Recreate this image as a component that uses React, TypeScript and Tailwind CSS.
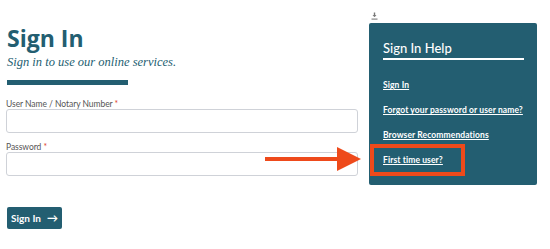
import React from "react";

const teal = "#235e71";

function DownloadIcon() {
  return (
    <svg width="7" height="8" viewBox="0 0 7 8" className="block">
      <path d="M3.5 0.5 V4.5" stroke="#777" strokeWidth="1.4" />
      <path d="M1.5 3 L3.5 5 L5.5 3 Z" fill="#777" />
      <rect x="0.5" y="6.5" width="6" height="1.2" fill="#888" />
    </svg>
  );
}

function Field({ label }: { label: string }) {
  return (
    <div className="flex flex-col">
      <label className="text-[8.5px] leading-[10px] tracking-[-0.05px] text-[#555]">
        {label} <span className="text-[#e0452a]">*</span>
      </label>
      <input className="mt-[0px] h-[24px] w-[352px] rounded-[3px] border border-[#cfd2d8] bg-white" />
    </div>
  );
}

const links = [
  "Sign In",
  "Forgot your password or user name?",
  "Browser Recommendations",
  "First time user?",
];

export default function App() {
  return (
    <div
      className="relative flex h-[249px] w-[550px] overflow-hidden bg-white"
      style={{ fontFamily: "Lato, 'Open Sans', sans-serif" }}
    >
      <div className="flex w-[362px] flex-col pl-[6px] pt-[25px]">
        <h1
          className="pl-[1px] text-[23px] font-bold leading-[26px]"
          style={{ color: teal, fontFamily: "'Open Sans', sans-serif" }}
        >
          Sign In
        </h1>
        <p
          className="mt-[3px] pl-[1px] italic leading-[16px]"
          style={{ color: teal, fontFamily: "'Liberation Serif', serif", fontSize: "12.5px" }}
        >
          Sign in to use our online services.
        </p>
        <div className="ml-[1px] mt-[10px] h-[5px] w-[121px]" style={{ backgroundColor: teal }} />
        <div className="mt-[14px] flex flex-col gap-[9px]">
          <Field label="User Name / Notary Number" />
          <Field label="Password" />
        </div>
        <button
          className="ml-[1px] mt-[31px] flex h-[22px] w-[55px] items-center justify-center gap-[6px] rounded-[2px] text-[10px] font-bold text-white"
          style={{ backgroundColor: teal }}
        >
          Sign In
          <span className="text-[11px]">→</span>
        </button>
      </div>

      <div className="flex flex-col pl-[7px] pt-[12px]">
        <div className="pl-[2px]">
          <DownloadIcon />
        </div>
        <div
          className="mt-[3px] flex h-[162px] w-[168px] flex-col rounded-[2px] pl-[14px] pr-[13px] pt-[16px]"
          style={{ backgroundColor: teal }}
        >
          <div className="text-[13px] font-medium leading-[18px] text-white">Sign In Help</div>
          <div className="mt-[1px] h-[2px] w-full bg-white" />
          <ul className="mt-[19px] flex flex-col gap-[12px]">
            {links.map((l) => (
              <li
                key={l}
                className="whitespace-nowrap text-[8.5px] font-bold leading-[13px] tracking-[0.1px] text-white underline"
              >
                {l}
              </li>
            ))}
          </ul>
        </div>
      </div>

      <svg className="absolute left-[265px] top-[147px]" width="96" height="24" viewBox="0 0 96 24">
        <rect x="0" y="10" width="74" height="4" fill="#ee4a1b" />
        <path d="M72 0 L96 12 L72 24 Z" fill="#ee4a1b" />
      </svg>
      <div className="absolute left-[370px] top-[144px] h-[32px] w-[95px] border-[4px] border-[#ee4a1b]" />
    </div>
  );
}
